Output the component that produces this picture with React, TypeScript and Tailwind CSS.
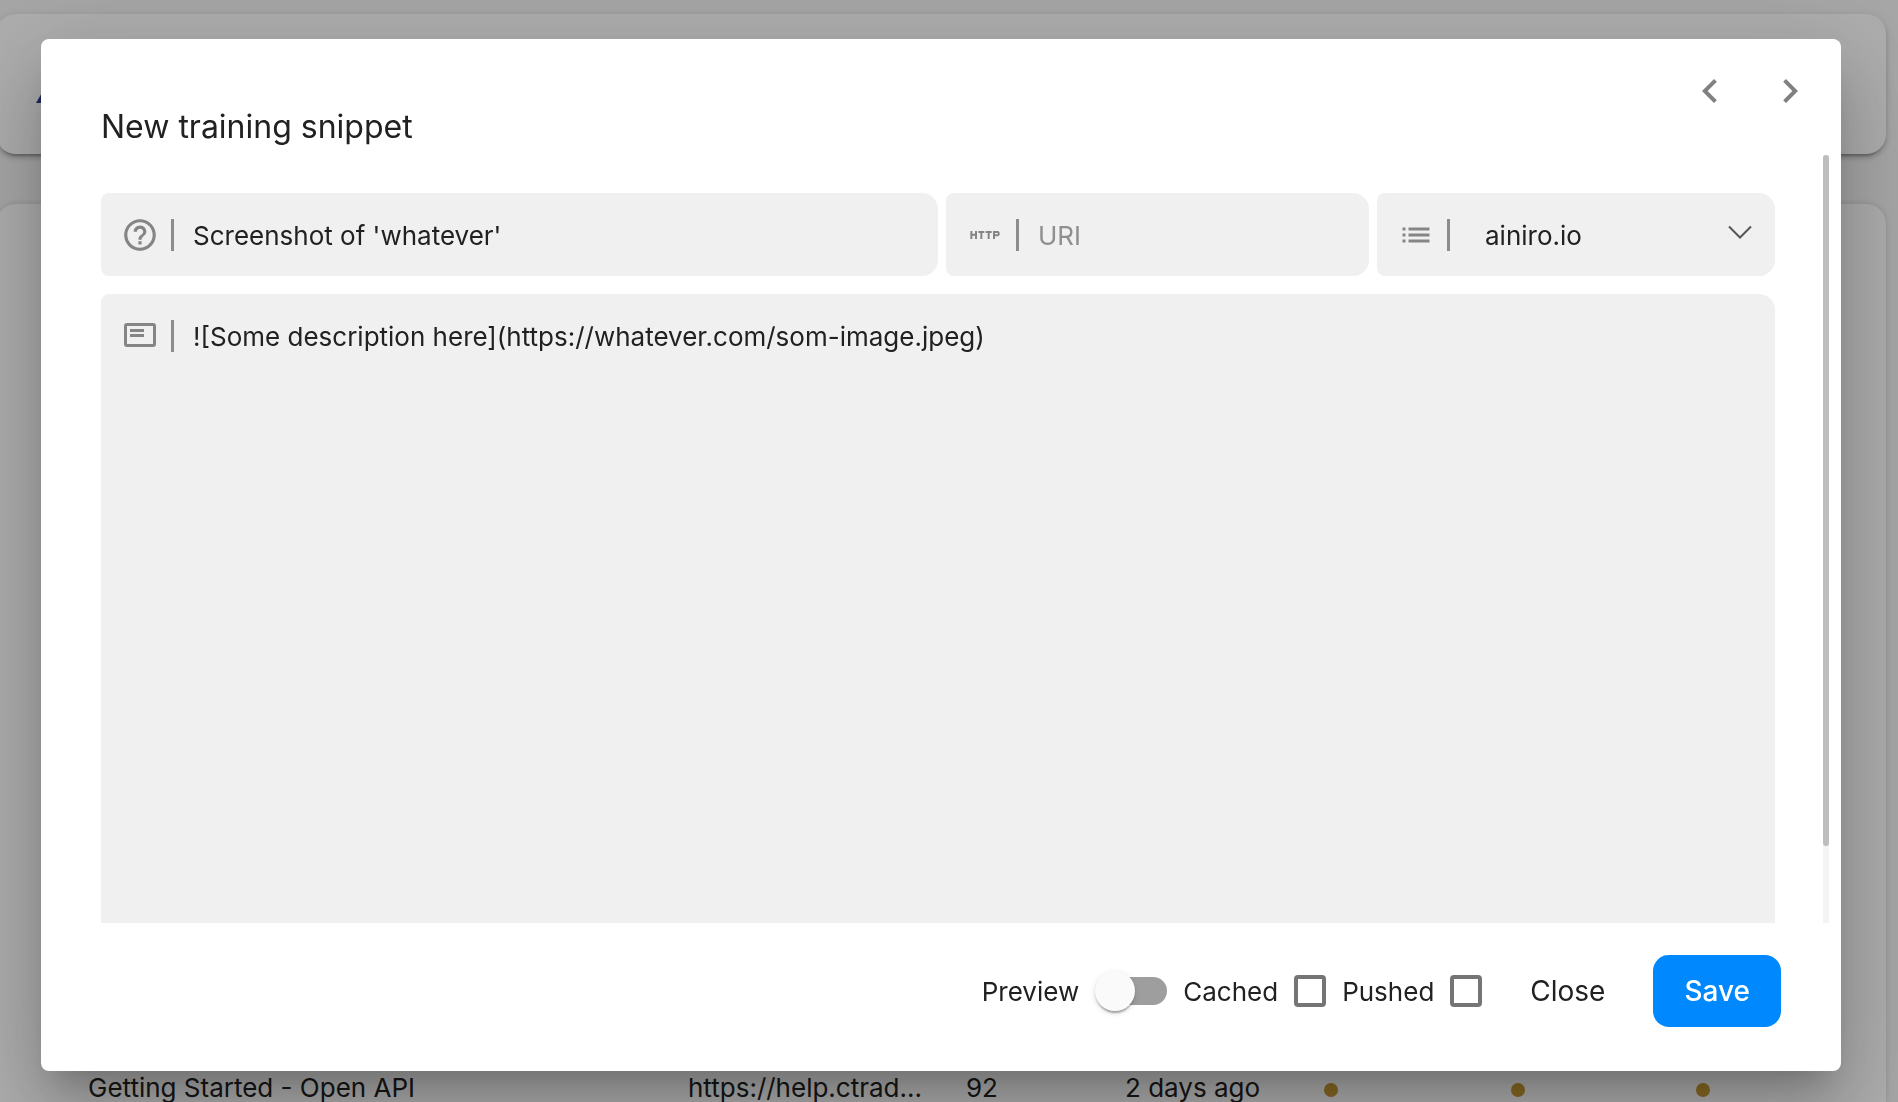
import { useState } from "react"
import type { ReactNode } from "react"
import { MdChevronLeft, MdChevronRight, MdHelpOutline, MdHttp, MdList } from "react-icons/md"

type FieldProps = {
  icon: ReactNode
  children: ReactNode
}

function Divider() {
  return <span className="h-8 w-[3px] shrink-0 bg-[#8c8c8c]" />
}

function Field({ icon, children }: FieldProps) {
  return (
    <div className="relative flex h-[83px] min-w-0 items-center gap-3 rounded-l-lg rounded-r-2xl bg-[#f0f0f0] pl-5 text-[#858585]">
      {icon}
      <Divider />
      {children}
    </div>
  )
}

function SnippetIcon() {
  return (
    <svg viewBox="0 0 38 38" className="size-[38px] shrink-0" fill="none" stroke="currentColor" aria-hidden="true">
      <rect x="4.5" y="8.500" width="29" height="21" rx="1.5" strokeWidth="3" />
      <path d="M9 14.5h14M9 19.5h14" strokeWidth="3" />
    </svg>
  )
}

type CheckProps = {
  label: string
}

function Check({ label }: CheckProps) {
  return (
    <label className="flex items-center gap-4">
      {label}
      <input type="checkbox" className="size-8 appearance-none rounded-[4px] border-4 border-[#757575] checked:bg-[#0088ff]" />
    </label>
  )
}

function Background() {
  return (
    <div className="-ml-1 flex h-screen flex-col gap-[50px] overflow-hidden pt-[14px] pr-3">
      <header className="flex h-[140px] shrink-0 items-center rounded-[20px] bg-white pl-10 shadow-[0_6px_2px_-4px_rgba(0,0,0,0.2),0_4px_4px_rgba(0,0,0,0.14),0_2px_10px_rgba(0,0,0,0.12)]">
        <svg viewBox="0 0 44 38" className="h-[38px] w-[44px]" aria-hidden="true">
          <path d="M0 38 22 0l22 38z" fill="#2b3a8c" />
        </svg>
      </header>
      <main className="flex flex-1 flex-col justify-end rounded-t-[20px] bg-white pr-[77px] pl-[92px] shadow-[0_0_6px_rgba(0,0,0,0.14)]">
        <table className="-mb-px w-full table-fixed text-left leading-[30px]">
          <tbody>
            <tr>
              <td className="w-[600px]">Getting Started - Open API</td>
              <td className="w-[278px]">https://help.ctrad...</td>
              <td className="w-[159px]">92</td>
              <td className="w-[199px]">2 days ago</td>
              <td>
                <span className="mt-1 block size-[14px] rounded-full bg-[#c99a34]" />
              </td>
              <td className="w-[185px]">
                <span className="mt-1 block size-[14px] rounded-full bg-[#c99a34]" />
              </td>
              <td className="w-[113px]">
                <span className="mt-1 block size-[14px] rounded-full bg-[#c99a34]" />
              </td>
            </tr>
          </tbody>
        </table>
      </main>
    </div>
  )
}

function SnippetDialog() {
  const [prompt, setPrompt] = useState("Screenshot of 'whatever'")
  const [completion, setCompletion] = useState("![Some description here](https://whatever.com/som-image.jpeg)")

  return (
    <div
      role="dialog"
      aria-labelledby="dialog-title"
      className="flex min-w-0 flex-1 flex-col rounded-lg bg-white shadow-[0_22px_30px_-14px_rgba(0,0,0,0.2),0_48px_76px_6px_rgba(0,0,0,0.14),0_18px_92px_16px_rgba(0,0,0,0.12)]"
    >
      <div className="flex items-start justify-between pt-3 pr-[11px] pb-1 pl-[60px]">
        <h2 id="dialog-title" className="mt-[52px] text-[32px] leading-[48px]">
          New training snippet
        </h2>
        <div className="flex text-[#808080]">
          <button type="button" aria-label="Previous" className="flex size-20 items-center justify-center">
            <MdChevronLeft className="size-12" />
          </button>
          <button type="button" aria-label="Next" className="flex size-20 items-center justify-center">
            <MdChevronRight className="size-12" />
          </button>
        </div>
      </div>

      <div className="flex min-h-0 flex-1 gap-12 pr-3 pl-[60px]">
        <div className="flex min-w-0 flex-1 flex-col gap-[18px] overflow-hidden pt-[38px]">
          <div className="grid grid-cols-[837fr_423fr_398fr] gap-2">
            <Field icon={<MdHelpOutline className="size-[38px] shrink-0" />}>
              <input
                aria-label="Prompt"
                value={prompt}
                onChange={(e) => setPrompt(e.target.value)}
                className="min-w-0 flex-1 pt-[2px] pl-[7px] text-[#212121] outline-none"
              />
            </Field>
            <Field icon={<MdHttp className="mx-[3px] size-8 shrink-0" />}>
              <input
                aria-label="URI"
                placeholder="URI"
                className="min-w-0 flex-1 pt-[2px] pl-[7px] text-[#212121] outline-none placeholder:text-[#8f8f8f]"
              />
            </Field>
            <Field icon={<MdList className="mx-px size-9 shrink-0" />}>
              <select
                aria-label="Type"
                className="h-full min-w-0 flex-1 appearance-none pt-[2px] pl-[23px] text-[#212121] outline-none"
              >
                <option>ainiro.io</option>
              </select>
              <svg
                viewBox="0 0 24 14"
                className="pointer-events-none absolute top-8 right-[23px] h-[14px] w-6"
                fill="none"
                stroke="#555"
                strokeWidth="2"
                aria-hidden="true"
              >
                <path d="M1 1.5 12 12.5 23 1.5" />
              </svg>
            </Field>
          </div>
          <div className="flex flex-1 items-start gap-3 rounded-tl-lg rounded-tr-2xl bg-[#f0f0f0] pt-[22px] pl-5 text-[#858585]">
            <SnippetIcon />
            <span className="flex h-10 items-center">
              <Divider />
            </span>
            <textarea
              aria-label="Completion"
              value={completion}
              onChange={(e) => setCompletion(e.target.value)}
              className="h-full flex-1 resize-none pt-px pl-[7px] leading-[40px] text-[#212121] outline-none"
            />
          </div>
        </div>
        <div className="w-[6px] bg-[#f4f4f4]" aria-hidden="true">
          <div className="h-[90%] rounded-full bg-[#bdbdbd]" />
        </div>
      </div>

      <div className="flex items-center justify-end pt-8 pr-[60px] pb-11">
        <div className="flex items-center gap-4">
          <label className="flex items-center gap-4">
            Preview
            <span className="relative flex h-10 w-[72px] items-center justify-end">
              <input
                type="checkbox"
                role="switch"
                className="peer h-7 w-[60px] appearance-none rounded-full bg-[#9e9e9e] checked:bg-[#0088ff]"
              />
              <span className="pointer-events-none absolute left-0 size-10 rounded-full bg-[#fafafa] shadow-[0_4px_2px_-2px_rgba(0,0,0,0.2),0_2px_2px_rgba(0,0,0,0.14),0_2px_6px_rgba(0,0,0,0.12)] peer-checked:left-8" />
            </span>
          </label>
          <Check label="Cached" />
          <Check label="Pushed" />
        </div>
        <button type="button" className="ml-4 h-[72px] px-8 text-[28px]">
          Close
        </button>
        <button type="button" className="ml-4 h-[72px] rounded-2xl bg-[#0088ff] px-[31px] text-[28px] font-medium text-white">
          Save
        </button>
      </div>
    </div>
  )
}

export default function App() {
  return (
    <div className="h-screen overflow-hidden bg-[#f5f5f5] font-['Inter',sans-serif] text-[26px] text-[#212121]">
      <Background />
      <div className="fixed inset-0 flex bg-black/32 pt-[39px] pr-[57px] pb-[31px] pl-[41px]">
        <SnippetDialog />
      </div>
    </div>
  )
}
